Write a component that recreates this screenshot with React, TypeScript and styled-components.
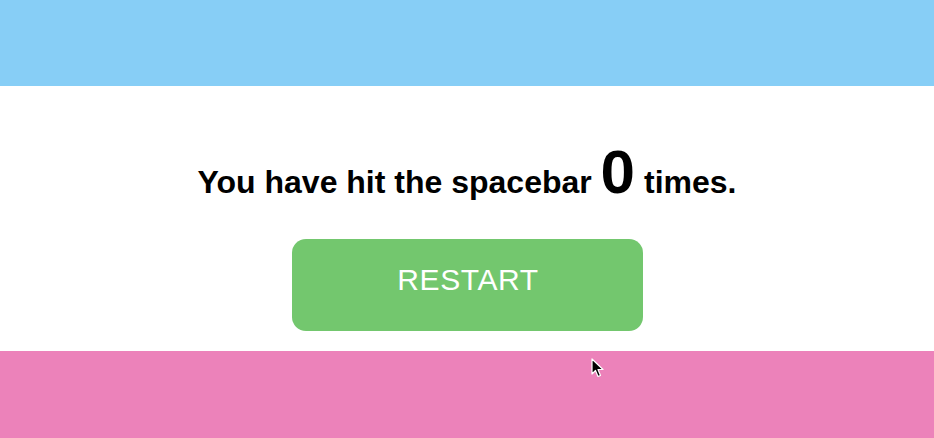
import React, { useEffect, useState } from "react";
import styled, { createGlobalStyle } from "styled-components";

const GlobalStyle = createGlobalStyle`
  html, body, #root { margin: 0; padding: 0; height: 100%; }
  body { font-family: "Liberation Sans", Arial, Helvetica, sans-serif; }
`;

const Page = styled.div`
  position: relative;
  display: flex;
  flex-direction: column;
  height: 100vh;
  overflow: hidden;
`;

const Band = styled.div<{ $place: "top" | "bottom" }>`
  flex: 0 0 ${(p) => (p.$place === "top" ? "86px" : "87px")};
  background: ${(p) => (p.$place === "top" ? "#87cef6" : "#ec82ba")};
`;

const Middle = styled.main`
  flex: 1;
  display: flex;
  flex-direction: column;
  align-items: center;
  padding-top: 55px;
  background: #fff;
`;

const Counter = styled.h1`
  margin: 0;
  font-size: 32px;
  font-weight: 700;
  color: #000;
  line-height: 62px;
`;

const Count = styled.span`
  font-size: 62px;
  line-height: 62px;
`;

const RestartButton = styled.button`
  margin-top: 26px;
  width: 351px;
  height: 92px;
  border: none;
  border-radius: 14px;
  background: #73c76e;
  color: #fff;
  font-family: "Liberation Sans", Arial, Helvetica, sans-serif;
  font-size: 30px;
  letter-spacing: 0.6px;
  cursor: pointer;
  padding: 0 0 10px 2px;
`;

const Pointer = styled.svg`
  position: absolute;
  left: 591px;
  top: 358px;
  pointer-events: none;
`;

export default function App() {
  const [hits, setHits] = useState(0);

  useEffect(() => {
    const onKey = (e: KeyboardEvent) => {
      if (e.code === "Space") {
        e.preventDefault();
        setHits((n) => n + 1);
      }
    };
    window.addEventListener("keydown", onKey);
    return () => window.removeEventListener("keydown", onKey);
  }, []);

  return (
    <>
      <GlobalStyle />
      <Page>
        <Band $place="top" />
        <Middle>
          <Counter>
            You have hit the spacebar <Count>{hits}</Count> times.
          </Counter>
          <RestartButton onClick={() => setHits(0)}>RESTART</RestartButton>
        </Middle>
        <Band $place="bottom" />
        <Pointer width="14" height="22" viewBox="0 0 14 22">
          <path
            d="M1 1 L1 16 L4.5 12.5 L7 18.5 L9.5 17.5 L7 11.5 L12 11.5 Z"
            fill="#000"
            stroke="#fff"
            strokeWidth="1.2"
            strokeLinejoin="round"
          />
        </Pointer>
      </Page>
    </>
  );
}
